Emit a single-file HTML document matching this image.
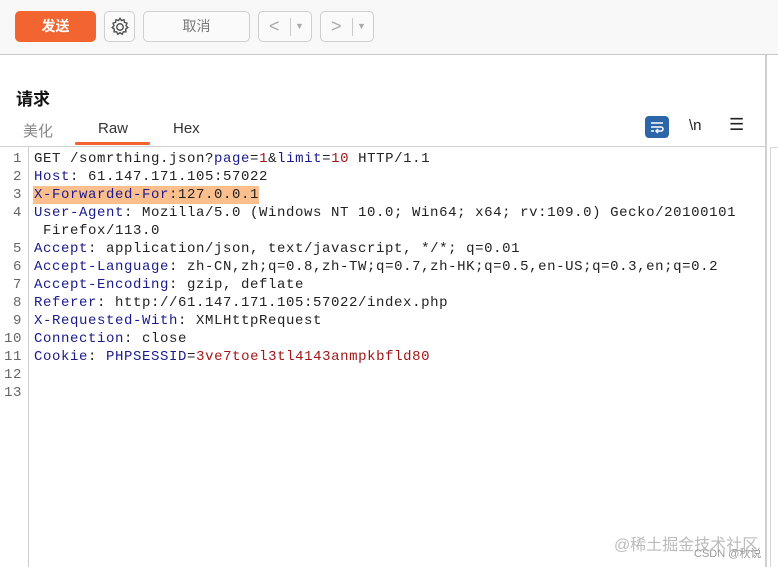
<!DOCTYPE html>
<html><head><meta charset="utf-8"><style>
*{margin:0;padding:0;box-sizing:border-box}
body{width:778px;height:567px;overflow:hidden;background:#fff;font-family:"Liberation Sans","Noto Sans CJK SC",sans-serif;position:relative}
.top{position:absolute;left:0;top:0;width:778px;height:55px;background:#f8f8f8;border-bottom:1px solid #c8c8c8}
.btn{position:absolute;top:11px;height:31px;border:1px solid #cfcfcf;border-radius:5px;background:#fafafa;color:#777;font-size:14px;text-align:center;line-height:29px}
.send{left:15px;width:81px;background:#f26430;border-color:#f26430;color:#fff;font-weight:bold}
.vl{position:absolute;left:765px;top:55px;width:2px;height:512px;background:#d0d0d0}
.vl2{position:absolute;left:770px;top:147px;width:1px;height:420px;background:#d8d8d8}
.vl2b{position:absolute;left:770px;top:147px;width:8px;height:1px;background:#d8d8d8}
h1{position:absolute;left:16px;top:85px;font-size:17px;font-weight:bold;color:#111}
.tab{position:absolute;top:120px;font-size:15px;color:#333}
.hr{position:absolute;left:0;top:146px;width:765px;height:1px;background:#d0d0d0}
.ul{position:absolute;left:75px;top:142px;width:75px;height:3px;background:#f26430;border-radius:1px}
.code{position:absolute;left:0;top:150px;font-family:"Liberation Mono",monospace;font-size:14px;letter-spacing:0.6px;line-height:18px;color:#222}
.ln{position:absolute;left:0;width:22px;text-align:right;color:#666}
.gut{position:absolute;left:28px;top:147px;width:1px;height:420px;background:#ccc}
.row{position:absolute;left:34px;white-space:pre}
.k{color:#1a1a8c}.v{color:#a31515}
.hl{position:absolute;left:33px;top:36px;width:226px;height:18px;background:#fbbf8e}
</style></head><body>
<div class="top">
<div class="btn send">发送</div>
<div class="btn" style="left:104px;width:31px;padding-top:4px"><svg width="22" height="22" viewBox="0 0 24 24" fill="none" stroke="#555" stroke-width="1.6"><circle cx="12" cy="12" r="3.5"/><path d="M12 2.5l1.6 2.4 2.8-.8.5 2.8 2.7 1-1 2.7 1.9 2.1-2.3 1.6.3 2.9-2.9.1-1.2 2.6-2.4-1.6-2.4 1.6-1.2-2.6-2.9-.1.3-2.9-2.3-1.6 1.9-2.1-1-2.7 2.7-1 .5-2.8 2.8.8z"/></svg></div>
<div class="btn" style="left:143px;width:107px">取消</div>
<div class="btn" style="left:258px;width:54px;text-align:left;padding-left:10px;color:#aaa;font-size:18px">&lt;<span style="position:absolute;left:31px;top:6px;width:1px;height:18px;background:#ccc"></span><span style="position:absolute;left:36px;top:0;font-size:9px">▼</span></div>
<div class="btn" style="left:320px;width:54px;text-align:left;padding-left:10px;color:#aaa;font-size:18px">&gt;<span style="position:absolute;left:31px;top:6px;width:1px;height:18px;background:#ccc"></span><span style="position:absolute;left:36px;top:0;font-size:9px">▼</span></div>
</div>
<div class="vl"></div><div class="vl2"></div><div class="vl2b"></div>
<h1>请求</h1>
<div class="tab" style="left:23px;color:#888">美化</div>
<div class="tab" style="left:98px">Raw</div>
<div class="tab" style="left:173px">Hex</div>
<div style="position:absolute;left:645px;top:116px;width:24px;height:22px;background:#2d66a8;border-radius:4px"><svg width="24" height="22" viewBox="0 0 24 22" fill="none" stroke="#fff" stroke-width="1.5"><path d="M6 7h12M6 11h10a2 2 0 0 1 0 4h-4M6 15h3"/><path d="M13 13l-2 2 2 2"/></svg></div>
<div style="position:absolute;left:689px;top:117px;font-size:15px;color:#222">\n</div>
<div style="position:absolute;left:729px;top:115px;font-size:17px;color:#222">☰</div>
<div class="hr"></div><div class="ul"></div>
<div class="gut"></div>
<div class="code">
<div class="hl"></div>
<div class="ln" style="top:0">1</div><div class="ln" style="top:18px">2</div><div class="ln" style="top:36px">3</div><div class="ln" style="top:54px">4</div><div class="ln" style="top:90px">5</div><div class="ln" style="top:108px">6</div><div class="ln" style="top:126px">7</div><div class="ln" style="top:144px">8</div><div class="ln" style="top:162px">9</div><div class="ln" style="top:180px">10</div><div class="ln" style="top:198px">11</div><div class="ln" style="top:216px">12</div><div class="ln" style="top:234px">13</div>
<div class="row" style="top:0">GET /somrthing.json?<span class="k">page</span>=<span class="v">1</span>&amp;<span class="k">limit</span>=<span class="v">10</span> HTTP/1.1</div>
<div class="row" style="top:18px"><span class="k">Host</span>: 61.147.171.105:57022</div>
<div class="row" style="top:36px"><span class="k">X-Forwarded-For</span>:127.0.0.1</div>
<div class="row" style="top:54px"><span class="k">User-Agent</span>: Mozilla/5.0 (Windows NT 10.0; Win64; x64; rv:109.0) Gecko/20100101</div>
<div class="row" style="top:72px"> Firefox/113.0</div>
<div class="row" style="top:90px"><span class="k">Accept</span>: application/json, text/javascript, */*; q=0.01</div>
<div class="row" style="top:108px"><span class="k">Accept-Language</span>: zh-CN,zh;q=0.8,zh-TW;q=0.7,zh-HK;q=0.5,en-US;q=0.3,en;q=0.2</div>
<div class="row" style="top:126px"><span class="k">Accept-Encoding</span>: gzip, deflate</div>
<div class="row" style="top:144px"><span class="k">Referer</span>: http://61.147.171.105:57022/index.php</div>
<div class="row" style="top:162px"><span class="k">X-Requested-With</span>: XMLHttpRequest</div>
<div class="row" style="top:180px"><span class="k">Connection</span>: close</div>
<div class="row" style="top:198px"><span class="k">Cookie</span>: <span class="k">PHPSESSID</span>=<span class="v">3ve7toel3tl4143anmpkbfld80</span></div>
</div>
<div style="position:absolute;left:614px;top:531px;font-size:16px;color:#bbb">@稀土掘金技术社区</div>
<div style="position:absolute;left:694px;top:545px;font-size:11px;color:#999">CSDN @秋说</div>
</body></html>
